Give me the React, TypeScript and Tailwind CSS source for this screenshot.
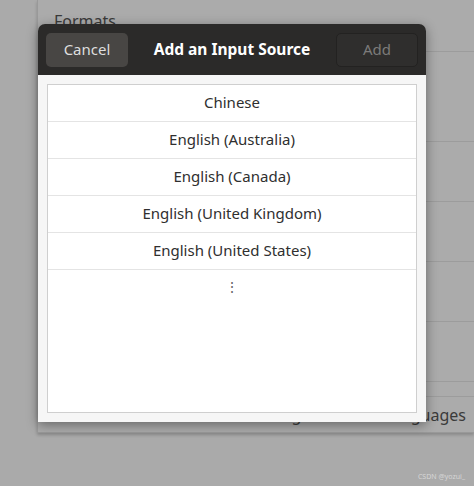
const rows = [
  'Chinese',
  'English (Australia)',
  'English (Canada)',
  'English (United Kingdom)',
  'English (United States)',
];

export default function App() {
  return (
    <div
      className="relative w-[474px] h-[486px] overflow-hidden bg-[#aaaaaa]"
      style={{ fontFamily: '"Noto Sans", "Open Sans", sans-serif' }}
    >
      {/* dimmed settings window behind */}
      <div className="absolute left-[37px] top-0 right-0 h-[433px] border-l border-b border-[#999999] bg-[#ababab] shadow-[0_2px_3px_rgba(0,0,0,0.2)] flex flex-col">
        <div className="h-[52px] pl-[16px] pt-[9px] text-[16px] text-[#3a3a3a] border-b border-[#9c9c9c]">Formats</div>
        <div className="h-[90px] border-b border-[#9c9c9c]" />
        <div className="h-[60px] border-b border-[#9c9c9c]" />
        <div className="h-[60px] border-b border-[#9c9c9c]" />
        <div className="h-[60px] border-b border-[#9c9c9c]" />
        <div className="h-[60px] border-b border-[#9c9c9c]" />
        <div className="h-[15px] border-b border-[#9c9c9c]" />
        <div className="flex-1 flex items-center justify-end pr-[8px] text-[16px] text-[#3a3a3a]">Manage Installed Languages</div>
      </div>

      {/* dialog */}
      <div className="absolute left-[38px] top-[24px] w-[388px] h-[398px] flex flex-col rounded-t-[7px] shadow-[0_3px_12px_rgba(0,0,0,0.4)]">
        <div className="h-[51px] shrink-0 flex items-center justify-between px-[8px] bg-[#2b2a29] rounded-t-[7px]">
          <button className="w-[82px] h-[34px] rounded-[5px] bg-[#484644] text-[15px] text-[#dedede]">Cancel</button>
          <span className="text-[15.5px] font-bold text-white">Add an Input Source</span>
          <button className="w-[82px] h-[34px] rounded-[5px] bg-[#2f2e2d] border border-[#232221] text-[15px] text-[#7c7b7a]">Add</button>
        </div>
        <div className="flex-1 bg-[#f6f6f6] p-[9px] flex">
          <div className="flex-1 bg-white border border-[#cfcfcf] flex flex-col">
            {rows.map((r) => (
              <div key={r} className="h-[37px] shrink-0 flex items-center justify-center border-b border-[#e4e4e4] text-[15px] text-[#2f2f2f] pb-[2px]">
                {r}
              </div>
            ))}
            <div className="h-[36px] flex items-center justify-center pb-[4px] text-[14px] text-[#666666]">⋮</div>
          </div>
        </div>
      </div>

      <div className="absolute right-[9px] bottom-[4px] text-[7px] text-[#d6d6d6]">CSDN @yozui_</div>
    </div>
  );
}
